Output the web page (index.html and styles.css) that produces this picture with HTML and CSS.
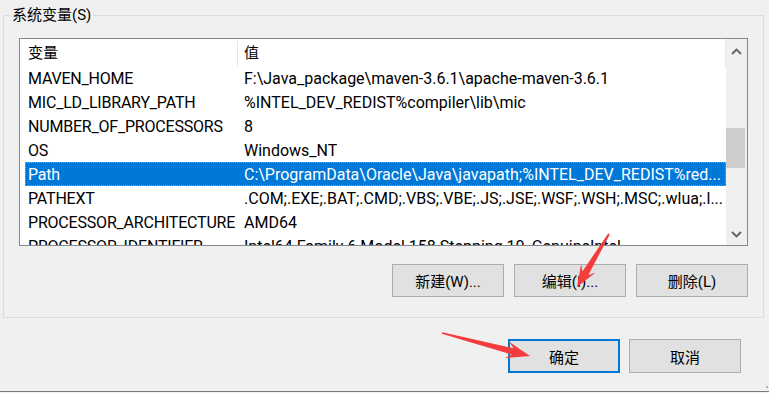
FILE: index.html
```html
<!DOCTYPE html>
<html>
<head>
<meta charset="utf-8">
<title>系统变量</title>
<link rel="stylesheet" href="styles.css">
</head>
<body>
<div class="window">
	<fieldset class="group">
		<legend>系统变量(S)</legend>
		<div class="group-body">
			<div class="list">
				<div class="list-body">
					<div class="list-head">
						<span class="col-name">变量</span>
						<span class="col-value">值</span>
					</div>
					<div class="row"><span class="col-name">MAVEN_HOME</span><span class="col-value">F:\Java_package\maven-3.6.1\apache-maven-3.6.1</span></div>
					<div class="row"><span class="col-name">MIC_LD_LIBRARY_PATH</span><span class="col-value">%INTEL_DEV_REDIST%compiler\lib\mic</span></div>
					<div class="row"><span class="col-name">NUMBER_OF_PROCESSORS</span><span class="col-value">8</span></div>
					<div class="row"><span class="col-name">OS</span><span class="col-value">Windows_NT</span></div>
					<div class="row selected"><span class="col-name">Path</span><span class="col-value">C:\ProgramData\Oracle\Java\javapath;%INTEL_DEV_REDIST%red...</span></div>
					<div class="row"><span class="col-name">PATHEXT</span><span class="col-value">.COM;.EXE;.BAT;.CMD;.VBS;.VBE;.JS;.JSE;.WSF;.WSH;.MSC;.wlua;.l...</span></div>
					<div class="row"><span class="col-name">PROCESSOR_ARCHITECTURE</span><span class="col-value">AMD64</span></div>
					<div class="row"><span class="col-name">PROCESSOR_IDENTIFIER</span><span class="col-value">Intel64 Family 6 Model 158 Stepping 10, GenuineIntel</span></div>
				</div>
				<div class="scrollbar">
					<span class="sb-btn">
						<svg width="11" height="7" viewBox="0 0 11 7"><path d="M1 6 L5.5 1.5 L10 6" fill="none" stroke="#606060" stroke-width="1.8"/></svg>
					</span>
					<span class="sb-track"><span class="sb-thumb"></span></span>
					<span class="sb-btn">
						<svg width="11" height="7" viewBox="0 0 11 7"><path d="M1 1 L5.5 5.5 L10 1" fill="none" stroke="#606060" stroke-width="1.8"/></svg>
					</span>
				</div>
			</div>
			<div class="actions">
				<button class="btn">新建(W)...</button>
				<button class="btn">编辑(I)...</button>
				<button class="btn">删除(L)</button>
			</div>
		</div>
	</fieldset>
	<div class="dialog-actions">
		<button class="btn btn-default">确定</button>
		<button class="btn">取消</button>
	</div>
	<div class="edge"></div>
	<span class="grip"></span>
</div>
<svg class="marks" width="769" height="393" viewBox="0 0 769 393">
	<polygon fill="#f43c3c" points="609.8,234.5 588.2,275.2 595.6,272.5 577,287 581.2,263.8 582.4,271.4 608.2,233.5"/>
	<polygon fill="#f43c3c" points="441.8,333.8 511.8,354.6 504.6,358 530,356 509,341.8 513.6,348.2 442.2,332.2"/>
</svg>
</body>
</html>
```
FILE: styles.css
```css
body{
	margin: 0;
	background: #f0f0f0;
	font-family: Roboto, "Noto Sans CJK SC", sans-serif;
	font-size: 16px;
	color: #000;
	overflow: hidden;
}
.window{
	position: relative;
	width: 769px;
	height: 393px;
	padding-top: 5px;
	box-sizing: border-box;
}
.group{
	width: 761px;
	margin: 0 0 0 3px;
	padding: 12px 0 20px;
	border: 1px solid #dcdcdc;
	box-sizing: border-box;
	min-inline-size: 0;
}
.group legend{
	margin-left: 6px;
	padding: 0 2px;
	font-size: 15px;
	line-height: 21px;
}
.group-body{
	padding: 0 15px;
}
.list{
	display: flex;
	height: 208px;
	border: 1px solid #828790;
	background: #fff;
	box-sizing: border-box;
}
.list-body{
	flex: 1;
	padding-left: 5px;
	overflow: hidden;
}
.list-head, .row{
	display: flex;
	white-space: nowrap;
}
.list-head{
	height: 27px;
	padding-top: 2px;
	box-sizing: border-box;
	font-size: 15px;
	line-height: 25px;
}
.list-head .col-name{
	width: 213px;
	margin: 0;
	letter-spacing: 0;
	border-right: 1px solid #e5e5e5;
	box-sizing: border-box;
}
.list-head .col-value{
	flex: 1;
	padding-left: 6px;
	border-right: 1px solid #e5e5e5;
}
.row{
	height: 24px;
	line-height: 25px;
}
.col-name{
	width: 212px;
	padding-left: 3px;
	box-sizing: border-box;
	flex: none;
	overflow: hidden;
	letter-spacing: -0.2px;
}
.row .col-value{
	padding-left: 7px;
	overflow: hidden;
}
.row.selected{
	background: #0078d7;
	color: #fff;
	outline: 1px dotted #ff8a2a;
	outline-offset: -1px;
}
.scrollbar{
	display: flex;
	flex-direction: column;
	width: 21px;
	background: #f0f0f0;
}
.sb-btn{
	display: flex;
	align-items: center;
	justify-content: center;
	height: 21px;
	flex: none;
}
.sb-btn:first-child{
	padding-top: 3px;
	box-sizing: border-box;
}
.sb-track{
	flex: 1;
	padding-top: 68px;
}
.sb-thumb{
	display: block;
	width: 19px;
	height: 40px;
	background: #cdcdcd;
}
.actions{
	display: flex;
	justify-content: flex-end;
	gap: 10px;
	margin-top: 18px;
}
.btn{
	width: 112px;
	height: 33px;
	margin: 0;
	padding: 0;
	border: 1px solid #adadad;
	background: #e1e1e1;
	font-family: Roboto, "Noto Sans CJK SC", sans-serif;
	font-size: 15px;
	color: #000;
}
.dialog-actions{
	display: flex;
	justify-content: flex-end;
	gap: 9px;
	margin-top: 21px;
	padding-right: 28px;
}
.dialog-actions .btn{
	height: 34px;
}
.btn-default{
	border: 2px solid #0078d7;
}
.edge{
	height: 2px;
	margin-top: 18px;
	border-top: 1px solid #7a7a7a;
}
.grip{
	position: absolute;
	right: 1px;
	bottom: 5px;
	width: 2px;
	height: 2px;
	background: #b4b4b4;
}
.marks{
	position: absolute;
	left: 0;
	top: 0;
	pointer-events: none;
}
```
